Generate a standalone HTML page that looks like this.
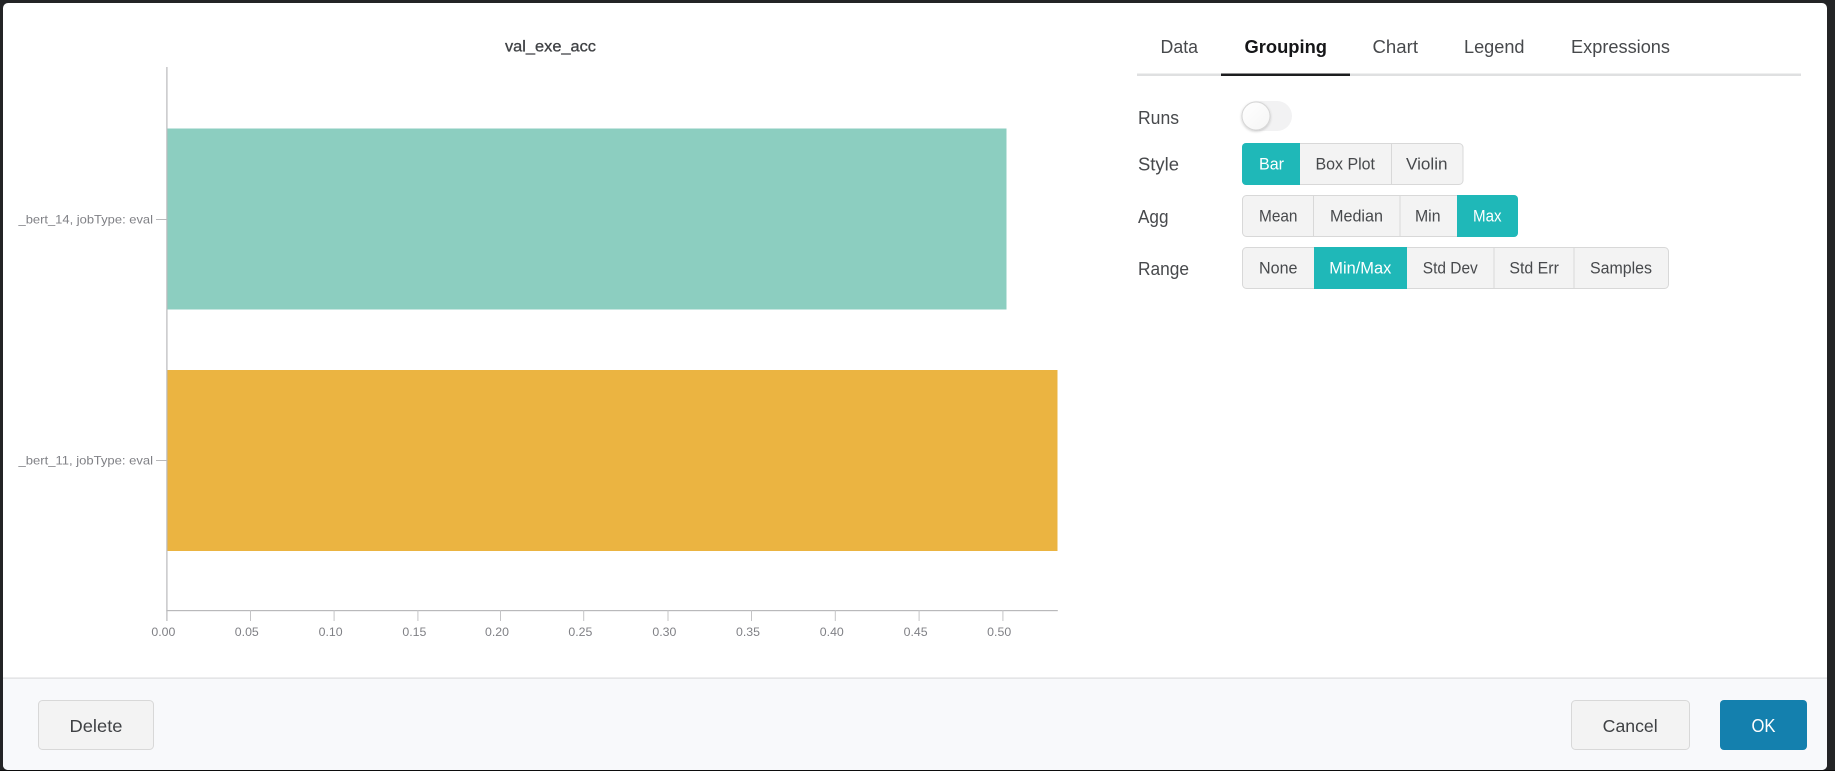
<!DOCTYPE html>
<html lang="en">
<head>
<meta charset="utf-8">
<title>val_exe_acc</title>
<style>
html,body{margin:0;padding:0;width:1835px;height:771px;overflow:hidden;background:#232426}
svg{display:block}
text{font-family:"Liberation Sans",sans-serif;fill:#3f4144}
.tab{font-size:18px;fill:#47494c}
.lab{font-size:18px;fill:#47494c}
.b{font-size:16.5px;fill:#47494c}
.w{font-size:16.5px;fill:#fff}
.t{font-size:12px;fill:#808186}
</style>
</head>
<body>
<svg width="1835" height="771" viewBox="0 0 1835 771" xmlns="http://www.w3.org/2000/svg">
<defs>
<clipPath id="m"><rect x="3" y="3" width="1824" height="767" rx="5"/></clipPath>
<filter id="s" x="-30%" y="-30%" width="160%" height="170%"><feDropShadow dx="0" dy="1" stdDeviation="1.2" flood-color="#000" flood-opacity=".2"/></filter>
<linearGradient id="th" x1="0" y1="0" x2="1" y2="1"><stop offset="0" stop-color="#fff"/><stop offset="1" stop-color="#f5f5f5"/></linearGradient>
</defs>
<rect width="1835" height="771" fill="#232426"/>
<rect y="770" width="1835" height="1" fill="#0c0c0d"/>
<g clip-path="url(#m)">
<rect x="3" y="3" width="1824" height="767" fill="#fff"/>
<rect x="3" y="678" width="1824" height="92" fill="#f8f9fb"/>
<rect x="3" y="677.5" width="1824" height="1.2" fill="#dcdddf"/>
</g>

<!-- chart -->
<text x="505" y="51.5" font-size="15.5" textLength="91" lengthAdjust="spacingAndGlyphs" stroke="#3f4144" stroke-width=".3">val_exe_acc</text>
<rect x="167" y="128.5" width="839.5" height="181" fill="#8ccec0"/>
<rect x="167" y="370" width="890.5" height="181" fill="#ebb441"/>
<rect x="166.3" y="67" width="1.2" height="554" fill="#b9b9bb"/>
<rect x="166.3" y="610" width="891.5" height="1.2" fill="#b9b9bb"/>
<rect x="156" y="219" width="11" height="1" fill="#b9b9bb"/>
<rect x="156" y="460" width="11" height="1" fill="#b9b9bb"/>
<text class="t" x="18.5" y="223.5" textLength="134.5" lengthAdjust="spacingAndGlyphs">_bert_14, jobType: eval</text>
<text class="t" x="18.5" y="464.5" textLength="134.5" lengthAdjust="spacingAndGlyphs">_bert_11, jobType: eval</text>
<g fill="#c4c4c6">
<rect x="250" y="610" width="1" height="11"/><rect x="333.6" y="610" width="1" height="11"/><rect x="417.4" y="610" width="1" height="11"/><rect x="500" y="610" width="1" height="11"/><rect x="583.2" y="610" width="1" height="11"/><rect x="667.5" y="610" width="1" height="11"/><rect x="751" y="610" width="1" height="11"/><rect x="834.8" y="610" width="1" height="11"/><rect x="918.6" y="610" width="1" height="11"/><rect x="1002.4" y="610" width="1" height="11"/>
</g>
<g class="ticks">
<text class="t" x="151.4" y="636" textLength="24" lengthAdjust="spacingAndGlyphs">0.00</text>
<text class="t" x="234.8" y="636" textLength="24" lengthAdjust="spacingAndGlyphs">0.05</text>
<text class="t" x="318.6" y="636" textLength="24" lengthAdjust="spacingAndGlyphs">0.10</text>
<text class="t" x="402.4" y="636" textLength="24" lengthAdjust="spacingAndGlyphs">0.15</text>
<text class="t" x="485" y="636" textLength="24" lengthAdjust="spacingAndGlyphs">0.20</text>
<text class="t" x="568.4" y="636" textLength="24" lengthAdjust="spacingAndGlyphs">0.25</text>
<text class="t" x="652.4" y="636" textLength="24" lengthAdjust="spacingAndGlyphs">0.30</text>
<text class="t" x="736" y="636" textLength="24" lengthAdjust="spacingAndGlyphs">0.35</text>
<text class="t" x="819.8" y="636" textLength="24" lengthAdjust="spacingAndGlyphs">0.40</text>
<text class="t" x="903.6" y="636" textLength="24" lengthAdjust="spacingAndGlyphs">0.45</text>
<text class="t" x="987.2" y="636" textLength="24" lengthAdjust="spacingAndGlyphs">0.50</text>
</g>

<!-- tabs -->
<rect x="1137" y="73.5" width="664" height="2.5" fill="#dfe0e1"/>
<rect x="1221" y="73.5" width="129" height="2.5" fill="#1c1d1f"/>
<text class="tab" x="1160.5" y="53" textLength="37.5" lengthAdjust="spacingAndGlyphs">Data</text>
<text x="1244.5" y="53" font-size="18" font-weight="700" style="fill:#151618" textLength="82.5" lengthAdjust="spacingAndGlyphs">Grouping</text>
<text class="tab" x="1372.5" y="53" textLength="45.5" lengthAdjust="spacingAndGlyphs">Chart</text>
<text class="tab" x="1464" y="53" textLength="60.5" lengthAdjust="spacingAndGlyphs">Legend</text>
<text class="tab" x="1571" y="53" textLength="99" lengthAdjust="spacingAndGlyphs">Expressions</text>

<!-- labels -->
<text class="lab" x="1138" y="124" textLength="41" lengthAdjust="spacingAndGlyphs">Runs</text>
<text class="lab" x="1138" y="170.5" textLength="41" lengthAdjust="spacingAndGlyphs">Style</text>
<text class="lab" x="1138" y="223" textLength="30.5" lengthAdjust="spacingAndGlyphs">Agg</text>
<text class="lab" x="1138" y="275" textLength="51" lengthAdjust="spacingAndGlyphs">Range</text>

<!-- toggle -->
<rect x="1242" y="101" width="50" height="30" rx="15" fill="#f2f2f3"/>
<circle cx="1256" cy="116" r="14" fill="url(#th)" stroke="#d6d6d6" stroke-width="1" filter="url(#s)"/>

<!-- style group -->
<rect x="1242.5" y="143.5" width="220.5" height="41" rx="4" fill="#f3f3f3" stroke="#d8d8d8"/>
<path d="M1300 143H1246a4 4 0 0 0-4 4V181a4 4 0 0 0 4 4H1300Z" fill="#1fb8b8"/>
<rect x="1391" y="143.5" width="1" height="41" fill="#d8d8d8"/>
<text class="w" x="1259" y="169.3" textLength="25" lengthAdjust="spacingAndGlyphs">Bar</text>
<text class="b" x="1315.5" y="169.3" textLength="59.5" lengthAdjust="spacingAndGlyphs">Box Plot</text>
<text class="b" x="1406" y="169.3" textLength="41.5" lengthAdjust="spacingAndGlyphs">Violin</text>

<!-- agg group -->
<rect x="1242.5" y="195.5" width="275" height="41" rx="4" fill="#f3f3f3" stroke="#d8d8d8"/>
<rect x="1313" y="195.5" width="1" height="41" fill="#d8d8d8"/>
<rect x="1399.5" y="195.5" width="1" height="41" fill="#d8d8d8"/>
<path d="M1457 195H1514a4 4 0 0 1 4 4V233a4 4 0 0 1-4 4H1457Z" fill="#1fb8b8"/>
<text class="b" x="1259" y="221.5" textLength="38.5" lengthAdjust="spacingAndGlyphs">Mean</text>
<text class="b" x="1330" y="221.5" textLength="53" lengthAdjust="spacingAndGlyphs">Median</text>
<text class="b" x="1415" y="221.5" textLength="25.5" lengthAdjust="spacingAndGlyphs">Min</text>
<text class="w" x="1473" y="221.5" textLength="28.5" lengthAdjust="spacingAndGlyphs">Max</text>

<!-- range group -->
<rect x="1242.5" y="247.5" width="426" height="41" rx="4" fill="#f3f3f3" stroke="#d8d8d8"/>
<rect x="1314" y="247" width="93" height="42" fill="#1fb8b8"/>
<rect x="1493.5" y="247.5" width="1" height="41" fill="#d8d8d8"/>
<rect x="1573.5" y="247.5" width="1" height="41" fill="#d8d8d8"/>
<text class="b" x="1259" y="273.5" textLength="38.5" lengthAdjust="spacingAndGlyphs">None</text>
<text class="w" x="1329.3" y="273.5" textLength="62" lengthAdjust="spacingAndGlyphs">Min/Max</text>
<text class="b" x="1422.8" y="273.5" textLength="55" lengthAdjust="spacingAndGlyphs">Std Dev</text>
<text class="b" x="1509.4" y="273.5" textLength="49.5" lengthAdjust="spacingAndGlyphs">Std Err</text>
<text class="b" x="1590" y="273.5" textLength="62" lengthAdjust="spacingAndGlyphs">Samples</text>

<!-- footer buttons -->
<rect x="38.5" y="700.5" width="115" height="49" rx="4" fill="#f3f3f3" stroke="#d8d8d8"/>
<text x="69.5" y="732" font-size="17.5" textLength="53" lengthAdjust="spacingAndGlyphs">Delete</text>
<rect x="1571.5" y="700.5" width="118" height="49" rx="4" fill="#f3f3f3" stroke="#d8d8d8"/>
<text x="1602.7" y="732" font-size="17.5" textLength="55" lengthAdjust="spacingAndGlyphs">Cancel</text>
<rect x="1720" y="700" width="87" height="50" rx="4" fill="#1480ae"/>
<text x="1751.5" y="732" font-size="18" style="fill:#fff" textLength="24" lengthAdjust="spacingAndGlyphs">OK</text>
</svg>
</body>
</html>
